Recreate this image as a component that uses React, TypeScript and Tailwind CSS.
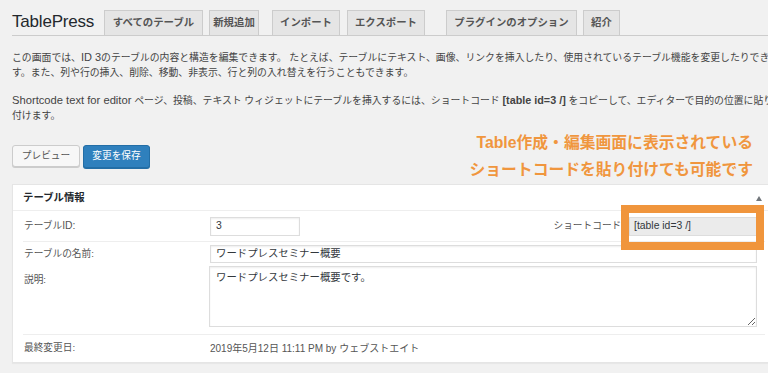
import React from "react";

const tabs = [
  { label: "すべてのテーブル", cls: "ml-[9px] w-[99px]" },
  { label: "新規追加", cls: "ml-[6px] w-[50px]" },
  { label: "インポート", cls: "ml-[13px] w-[68px]" },
  { label: "エクスポート", cls: "ml-[7px] w-[78px]" },
  { label: "プラグインのオプション", cls: "ml-[21px] w-[131px]" },
  { label: "紹介", cls: "ml-[6px] w-[37px]" },
];

export default function App() {
  return (
    <div className="relative w-[768px] h-[373px] overflow-hidden bg-[#f1f1f1] text-[#444] font-['Liberation_Sans','Noto_Sans_CJK_JP',sans-serif]">
      {/* Title + tabs */}
      <div className="ml-[12px] w-[780px] h-[36px] pt-[10px] flex items-end border-b border-[#ccc]">
        <h1 className="self-start w-[83px] text-[17px] leading-[23px] tracking-[-0.2px] text-[#23282d]">
          TablePress
        </h1>
        {tabs.map((t) => (
          <div
            key={t.label}
            className={`${t.cls} h-[25px] flex items-center justify-center bg-[#e5e5e5] border border-b-0 border-[#ccc] text-[10.4px] font-semibold text-[#555] whitespace-nowrap`}
          >
            {t.label}
          </div>
        ))}
      </div>

      {/* Description */}
      <div className="px-[12px] mt-[14px] text-[9.85px] leading-[15px] whitespace-nowrap">
        <p>
          この画面では、<span className="text-[11px]">ID 3</span>のテーブルの内容と構造を編集できます。 たとえば、テーブルにテキスト、画像、リンクを挿入したり、使用されているテーブル機能を変更したりできます。
          <br />
          す。また、列や行の挿入、削除、移動、非表示、行と列の入れ替えを行うこともできます。
        </p>
        <p className="mt-[13px]">
          <span className="text-[11.2px]">Shortcode text for editor</span> ページ、投稿、テキスト ウィジェットにテーブルを挿入するには、ショートコード{" "}
          <span className="font-bold text-[10.8px]">[table id=3 /]</span> をコピーして、エディターで目的の位置に貼り
          <br />
          付けます。
        </p>
      </div>

      {/* Buttons + annotation */}
      <div className="mt-[5px] h-[55px] pl-[12px] pr-[15px] flex items-center justify-between">
        <div className="flex items-center gap-[3px] mt-[1px]">
          <div className="w-[68px] h-[22px] flex items-center justify-center rounded-[3px] border border-[#ccc] bg-[#f7f7f7] shadow-[0_1px_0_#ccc] text-[9.7px] text-[#555]">
            プレビュー
          </div>
          <div className="w-[67px] h-[23px] flex items-center justify-center rounded-[3px] border border-[#236ea6] bg-[#2f80bd] shadow-[0_1px_0_#236ea6] text-[9.7px] text-white">
            変更を保存
          </div>
        </div>
        <div className="text-right text-[15.8px] leading-[27px] font-bold text-[#f0963e]">
          Table作成・編集画面に表示されている
          <br />
          ショートコードを貼り付けても可能です
        </div>
      </div>

      {/* Panel */}
      <div className="mt-[1px] ml-[12px] w-[764px] bg-white border border-[#e5e5e5] shadow-[0_1px_1px_rgba(0,0,0,0.04)]">
        <div className="h-[26px] pl-[10px] pr-[13px] flex items-center justify-between border-b border-[#eee]">
          <span className="text-[10.4px] font-bold text-[#23282d]">テーブル情報</span>
          <svg width="6" height="5" viewBox="0 0 6 5" className="mt-[1px]">
            <path d="M3 0 L6 5 L0 5 Z" fill="#72777c" />
          </svg>
        </div>
        <div className="px-[10px] text-[9.7px] text-[#555]">
          {/* Row 1 */}
          <div className="h-[31px] flex items-center border-b border-[#eee]">
            <div className="w-[187px] pl-[1px]">
              テーブル<span className="text-[10.4px]">ID:</span>
            </div>
            <div className="w-[90px] h-[19px] flex items-center px-[5px] border border-[#ddd] shadow-[inset_0_1px_2px_rgba(0,0,0,0.07)] text-[10.4px] text-[#32373c]">
              3
            </div>
            <div className="flex-1" />
            <div className="mr-[5px] whitespace-nowrap">ショートコード:</div>
            <div className="w-[128px] h-[19px] mr-[8px] flex items-center px-[4px] border border-[#ddd] bg-[#ebebeb] text-[10.4px] text-[#32373c]">
              [table id=3 /]
            </div>
          </div>
          {/* Name + description */}
          <div className="pt-[3px] pb-[7px] border-b border-[#eee]">
            <div className="flex items-center">
              <div className="w-[187px] pl-[1px]">テーブルの名前:</div>
              <div className="w-[547px] h-[18px] flex items-center px-[5px] border border-[#ddd] shadow-[inset_0_1px_2px_rgba(0,0,0,0.07)] text-[10.4px] text-[#32373c]">
                ワードプレスセミナー概要
              </div>
            </div>
            <div className="flex items-start mt-[3px]">
              <div className="w-[186px] pl-[1px] pt-[6px] leading-[15px]">説明:</div>
              <textarea
                readOnly
                defaultValue="ワードプレスセミナー概要です。"
                className="w-[548px] h-[61px] pl-[6px] pt-[3px] border border-[#ddd] shadow-[inset_0_1px_2px_rgba(0,0,0,0.07)] text-[10.4px] leading-[15px] text-[#32373c] outline-none"
              />
            </div>
          </div>
          {/* Last modified */}
          <div className="h-[27px] flex items-center">
            <div className="w-[187px] pl-[1px]">最終変更日:</div>
            <div className="text-[10px]">2019年5月12日 11:11 PM by ウェブストエイト</div>
          </div>
        </div>
      </div>

      {/* Annotation box */}
      <div className="absolute left-[621px] top-[205px] w-[143px] h-[45px] border-[8px] border-[#f0953c]" />
    </div>
  );
}
